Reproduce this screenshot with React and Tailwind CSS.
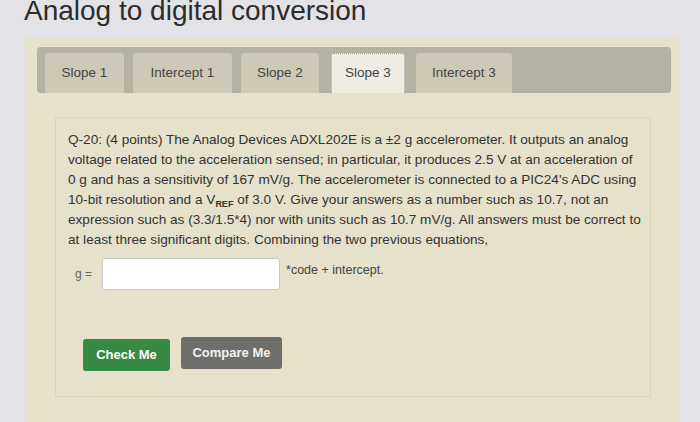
import React from 'react';

const tabs = [
    { label: 'Slope 1', w: 'w-[79px]' },
    { label: 'Intercept 1', w: 'w-[99px]' },
    { label: 'Slope 2', w: 'w-[78px]' },
    { label: 'Slope 3', w: 'w-[74px]', active: true },
    { label: 'Intercept 3', w: 'w-[96px]' },
];

const App = () => {
    return (
        <div className="w-[700px] h-[422px] overflow-hidden bg-[#e3e2e7] font-['Liberation_Sans',Arial,sans-serif] text-[#333]">
            <h1 className="ml-[24px] -mt-[5px] text-[28px] leading-[32px] text-[#2c2c2c]">Analog to digital conversion</h1>

            <div className="ml-[25px] mt-[10px] w-[654px] h-[400px] bg-[#e5e1ca] rounded-t-[4px] pl-[12px] pr-[8px] pt-[10px]">
                {/* tab strip */}
                <div className="flex items-end h-[46px] bg-[#b4b2a2] rounded-[4px] pl-[8px]">
                    {tabs.map((tab, i) => (
                        <div
                            key={tab.label}
                            className={`${tab.w} h-[40px] flex items-center justify-center text-[13.5px] text-[#444] rounded-t-[3px] ${i > 0 ? (i === 3 ? 'ml-[12px]' : i === 4 ? 'ml-[11px]' : 'ml-[9px]') : ''} ${tab.active ? 'bg-[#efede3] border border-dotted border-[#9a9a90] border-b-0' : 'bg-[#cdc9b6]'}`}
                        >
                            {tab.label}
                        </div>
                    ))}
                </div>

                {/* question */}
                <div className="mt-[24px] ml-[18px] mr-[20px] h-[280px] border border-[#d9d5be] pl-[12px] pr-[6px] pt-[12px]">
                    <div className="text-[13.6px] leading-[20px] whitespace-nowrap">
                        <div>Q-20: (4 points) The Analog Devices ADXL202E is a ±2 g accelerometer. It outputs an analog</div>
                        <div>voltage related to the acceleration sensed; in particular, it produces 2.5 V at an acceleration of</div>
                        <div>0 g and has a sensitivity of 167 mV/g. The accelerometer is connected to a PIC24's ADC using</div>
                        <div>
                            10-bit resolution and a V<span className="inline-block text-[9px] leading-none font-bold translate-y-[3px]">REF</span> of 3.0 V. Give your answers as a number such as 10.7, not an
                        </div>
                        <div>expression such as (3.3/1.5*4) nor with units such as 10.7 mV/g. All answers must be correct to</div>
                        <div>at least three significant digits. Combining the two previous equations,</div>
                    </div>

                    <div className="flex items-center mt-[8px] ml-[7px]">
                        <span className="text-[12px] text-[#666]">g =</span>
                        <input
                            type="text"
                            className="ml-[10px] w-[178px] h-[32px] bg-white border border-[#c9c9c9] rounded-[3px] outline-none"
                        />
                        <span className="ml-[6px] -mt-[8px] text-[12.5px] text-[#444]">*code + intercept.</span>
                    </div>

                    <div className="flex items-start mt-[47px] ml-[15px] gap-[11px]">
                        <button className="mt-[2px] w-[87px] h-[32px] bg-[#378a43] text-white text-[13px] font-bold rounded-[3px]">
                            Check Me
                        </button>
                        <button className="w-[101px] h-[32px] bg-[#6e6f6a] text-[#f2f2f2] text-[13px] font-bold rounded-[3px]">
                            Compare Me
                        </button>
                    </div>
                </div>
            </div>
        </div>
    );
};

export default App;
